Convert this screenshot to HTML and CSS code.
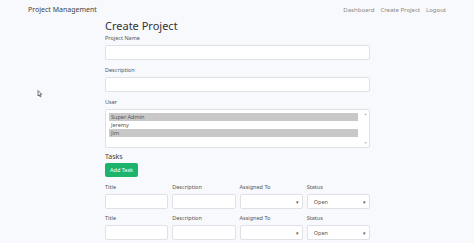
FILE: index.html
```html
<!DOCTYPE html>
<html lang="en">
<head>
    <meta charset="UTF-8">
    <meta name="viewport" content="width=device-width, initial-scale=1.0">
    <title>Create Project</title>
    <link rel="stylesheet" href="styles.css">
</head>
<body>
    <nav class="navbar">
        <a class="brand" href="#">Project Management</a>
        <div class="links">
            <a href="#">Dashboard</a>
            <a href="#">Create Project</a>
            <a href="#">Logout</a>
        </div>
    </nav>
    <main class="container">
        <h1>Create Project</h1>
        <form>
            <div class="field">
                <label>Project Name</label>
                <input type="text" class="control">
            </div>
            <div class="field">
                <label>Description</label>
                <input type="text" class="control">
            </div>
            <div class="field users">
                <label>User</label>
                <div class="multi">
                    <div class="opt selected">Super Admin</div>
                    <div class="opt">Jeremy</div>
                    <div class="opt selected">Jim</div>
                    <div class="scroll"><span>▲</span><span>▼</span></div>
                </div>
            </div>
            <h2>Tasks</h2>
            <button type="button" class="btn-add">Add Task</button>
            <div class="task-row">
                <div class="col"><label>Title</label><input type="text" class="control"></div>
                <div class="col"><label>Description</label><input type="text" class="control"></div>
                <div class="col"><label>Assigned To</label><div class="control sel"><span></span><i>▾</i></div></div>
                <div class="col"><label>Status</label><div class="control sel"><span>Open</span><i>▾</i></div></div>
            </div>
            <div class="task-row">
                <div class="col"><label>Title</label><input type="text" class="control"></div>
                <div class="col"><label>Description</label><input type="text" class="control"></div>
                <div class="col"><label>Assigned To</label><div class="control sel"><span></span><i>▾</i></div></div>
                <div class="col"><label>Status</label><div class="control sel"><span>Open</span><i>▾</i></div></div>
            </div>
        </form>
    </main>
    <!-- mouse pointer caught in the capture -->
    <svg class="cursor" width="7" height="9" viewBox="0 0 7 9">
        <path d="M2 1.5 L2 7 L3.2 5.8 L4.2 8 L5 7.6 L4.1 5.4 L5.8 5.4 Z" fill="#fff" stroke="#555" stroke-width="0.8" stroke-linejoin="round"/>
    </svg>
</body>
</html>
```
FILE: styles.css
```css
body {
    margin: 0;
    background: #f8f9fc;
    font-family: "Noto Sans", sans-serif;
    color: #333;
}
a { text-decoration: none; color: inherit; }
.navbar {
    display: flex;
    justify-content: space-between;
    align-items: center;
    height: 19px;
    padding: 0 28px 0 28px;
}
.brand { font-size: 7px; color: #444; }
.links { display: flex; gap: 6px; font-size: 6px; color: #888; }
.container {
    width: 265px;
    margin-left: 105px;
}
h1 {
    font-size: 11px;
    font-weight: 400;
    margin: 0 0 2px;
    line-height: 14px;
    color: #333;
}
label {
    display: block;
    font-size: 5.5px;
    line-height: 7px;
    color: #555;
    margin-bottom: 3px;
}
.field { margin-bottom: 7px; }
.field.users { margin-bottom: 4px; }
.control {
    display: block;
    box-sizing: border-box;
    width: 100%;
    height: 15px;
    margin: 0;
    border: 1px solid #dfe1e6;
    border-radius: 2px;
    background: #fff;
}
.multi {
    position: relative;
    box-sizing: border-box;
    height: 39px;
    border: 1px solid #dfe1e6;
    border-radius: 2px;
    background: #fff;
    padding: 3px 11px 0 3px;
}
.opt {
    font-size: 5.5px;
    line-height: 8px;
    height: 8px;
    padding-left: 2px;
    color: #555;
}
.opt.selected { background: #c8c8c8; }
.scroll {
    position: absolute;
    right: 2px;
    top: 2px;
    bottom: 2px;
    display: flex;
    flex-direction: column;
    justify-content: space-between;
    font-size: 3px;
    color: #999;
}
h2 {
    font-size: 7px;
    font-weight: 400;
    margin: 0 0 2px;
    line-height: 9px;
    color: #444;
}
.btn-add {
    display: block;
    border: 0;
    border-radius: 2px;
    background: #1cb36c;
    color: #fff;
    font-family: inherit;
    font-size: 5.5px;
    height: 14px;
    width: 33px;
    padding: 0;
    margin-bottom: 7px;
}
.task-row {
    display: grid;
    grid-template-columns: repeat(4, 1fr);
    gap: 4px;
    margin-bottom: 6px;
}
.sel {
    display: flex;
    justify-content: space-between;
    align-items: center;
    padding: 0 3px 0 6px;
    font-size: 5.5px;
    color: #555;
}
.sel i { font-style: normal; font-size: 5px; color: #555; }
.cursor {
    position: absolute;
    left: 36px;
    top: 89px;
}
```
